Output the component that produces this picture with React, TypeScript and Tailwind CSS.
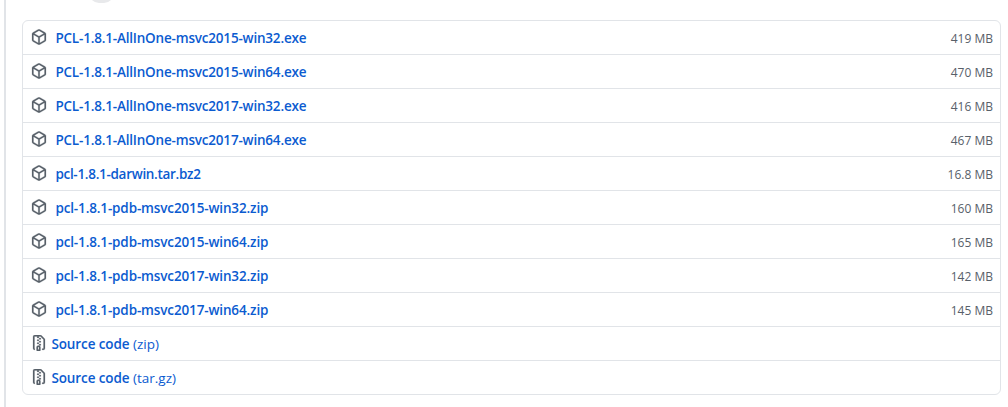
type Asset = { name: string; size?: string; suffix?: string; spacing: string };

const assets: Asset[] = [
  { name: "PCL-1.8.1-AllInOne-msvc2015-win32.exe", size: "419 MB", spacing: "tracking-[-0.19px]" },
  { name: "PCL-1.8.1-AllInOne-msvc2015-win64.exe", size: "470 MB", spacing: "tracking-[-0.19px]" },
  { name: "PCL-1.8.1-AllInOne-msvc2017-win32.exe", size: "416 MB", spacing: "tracking-[-0.19px]" },
  { name: "PCL-1.8.1-AllInOne-msvc2017-win64.exe", size: "467 MB", spacing: "tracking-[-0.19px]" },
  { name: "pcl-1.8.1-darwin.tar.bz2", size: "16.8 MB", spacing: "tracking-[-0.3px]" },
  { name: "pcl-1.8.1-pdb-msvc2015-win32.zip", size: "160 MB", spacing: "tracking-[-0.14px]" },
  { name: "pcl-1.8.1-pdb-msvc2015-win64.zip", size: "165 MB", spacing: "tracking-[-0.14px]" },
  { name: "pcl-1.8.1-pdb-msvc2017-win32.zip", size: "142 MB", spacing: "tracking-[-0.14px]" },
  { name: "pcl-1.8.1-pdb-msvc2017-win64.zip", size: "145 MB", spacing: "tracking-[-0.14px]" },
  { name: "Source code", suffix: "(zip)", spacing: "tracking-[-0.1px]" },
  { name: "Source code", suffix: "(tar.gz)", spacing: "tracking-[-0.1px]" },
];

const PACKAGE =
  "M8.878.392a1.75 1.75 0 00-1.756 0l-5.25 3.045A1.75 1.75 0 001 4.951v6.098c0 .624.332 1.2.872 1.514l5.25 3.045a1.75 1.75 0 001.756 0l5.25-3.045c.54-.313.872-.89.872-1.514V4.951c0-.624-.332-1.2-.872-1.514L8.878.392zM7.875 1.69a.25.25 0 01.25 0l4.63 2.685L8 7.133 3.245 4.375l4.63-2.685zM2.5 5.677v5.372c0 .09.047.171.125.216l4.625 2.683V8.432L2.5 5.677zm6.25 8.271l4.625-2.683a.25.25 0 00.125-.216V5.677L8.75 8.432v5.516z";
const FILE_ZIP =
  "M3.5 1.75a.25.25 0 01.25-.25h3a.75.75 0 000 1.5h.5a.75.75 0 000-1.5h2.086a.25.25 0 01.177.073l2.914 2.914a.25.25 0 01.073.177v8.586a.25.25 0 01-.25.25h-.5a.75.75 0 000 1.5h.5A1.75 1.75 0 0014 13.25V4.664c0-.464-.184-.909-.513-1.237L10.573.513A1.75 1.75 0 009.336 0H3.75A1.75 1.75 0 002 1.75v11.5c0 .649.353 1.214.874 1.515a.75.75 0 10.752-1.298.25.25 0 01-.126-.217V1.75zM8.75 3a.75.75 0 000 1.5h.5a.75.75 0 000-1.5h-.5zM6 5.25a.75.75 0 01.75-.75h.5a.75.75 0 010 1.5h-.5A.75.75 0 016 5.25zm2 1.5A.75.75 0 018.75 6h.5a.75.75 0 010 1.5h-.5A.75.75 0 018 6.75zm-1.25.75a.75.75 0 000 1.5h.5a.75.75 0 000-1.5h-.5zM8 9.75A.75.75 0 018.75 9h.5a.75.75 0 010 1.5h-.5A.75.75 0 018 9.75zm-.75.75a1.75 1.75 0 00-1.75 1.75v3c0 .414.336.75.75.75h2.5a.75.75 0 00.75-.75v-3a1.75 1.75 0 00-1.75-1.75h-.5zM7 12.25a.25.25 0 01.25-.25h.5a.25.25 0 01.25.25v2.25H7v-2.25z";

function AssetRow({ asset }: { asset: Asset }) {
  return (
    <li className="flex h-[34px] items-start border-b border-[#e1e4e8] pr-[7px] pl-2 last:h-[33px] last:border-b-0">
      <svg viewBox="0 0 16 16" className="mt-2 h-4 w-4 shrink-0 fill-[#586069] stroke-[#586069] stroke-[0.2]">
        <path fillRule="evenodd" d={asset.size ? PACKAGE : FILE_ZIP} />
      </svg>
      <a
        className={`${asset.size ? "ml-[8.4px]" : "ml-[4.4px]"} ${asset.spacing} mt-[7px] text-[13.5px] leading-[21px] whitespace-nowrap text-[#0b5bd0]`}
      >
        <span className="font-semibold">{asset.name}</span>
        {asset.suffix && <span className="tracking-normal"> {asset.suffix}</span>}
      </a>
      {asset.size && (
        <small className="mt-[9px] ml-auto text-[12px] leading-[18px] whitespace-nowrap text-[#586069]">
          {asset.size}
        </small>
      )}
    </li>
  );
}

export default function App() {
  return (
    <main className="flex h-[407px] w-[1008px] overflow-hidden bg-white pl-1 font-['Open_Sans','Noto_Sans',sans-serif]">
      <div className="w-full border-l-2 border-[#e1e4e8] pl-4">
        <div className="flex h-5 items-start pl-[67px]">
          <span className="-mt-[17px] h-5 w-[25px] shrink-0 rounded-full bg-[#e8e9eb]" />
        </div>
        <ul className="w-[979px] rounded-md border border-[#e1e4e8]">
          {assets.map((asset) => (
            <AssetRow key={asset.name + (asset.suffix ?? "")} asset={asset} />
          ))}
        </ul>
      </div>
    </main>
  );
}
